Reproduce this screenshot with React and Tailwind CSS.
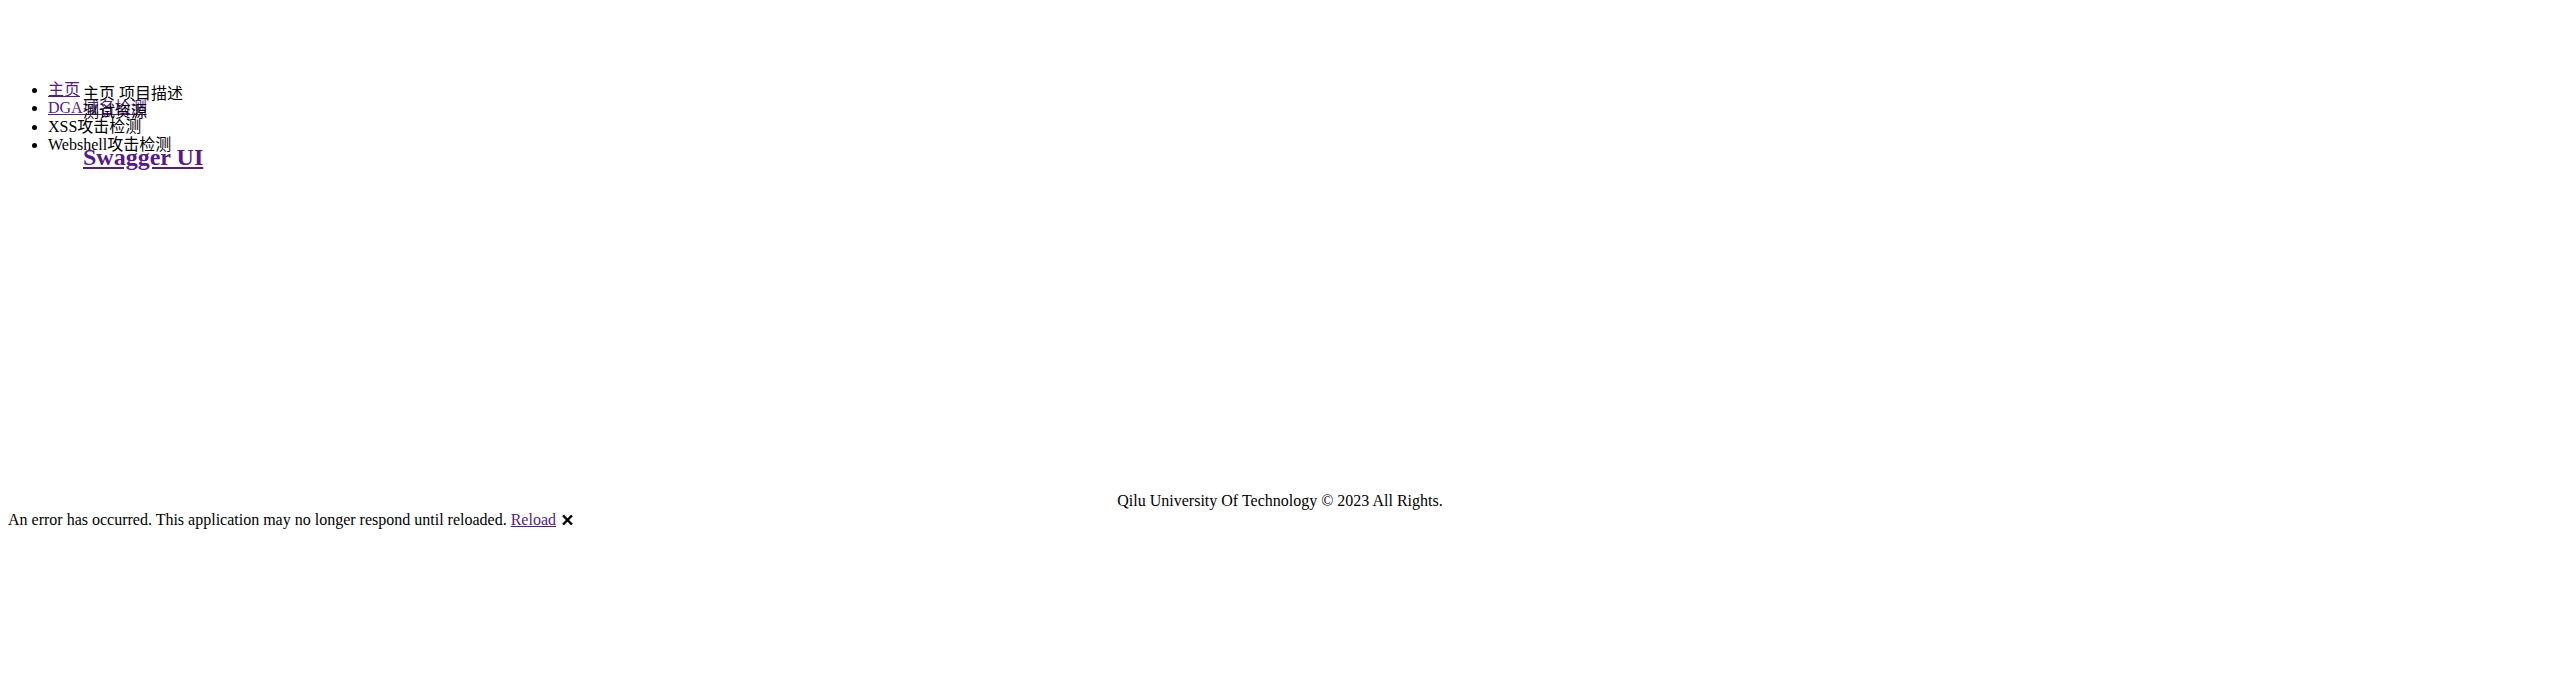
import React from "react";

export default function App() {
  return (
    <div className="relative min-h-[684px] bg-white p-2 font-['Liberation_Serif','Noto_Sans_CJK_SC',serif] text-[16px] leading-[18.4px] text-black">
      <ul className="mt-[73px] list-disc pl-10">
        <li>
          <a href="#" className="text-[#551a8b] underline">主页</a>
        </li>
        <li>
          <a href="#" className="text-[#551a8b] underline">DGA域名检测</a>
        </li>
        <li>XSS攻击检测</li>
        <li>Webshell攻击检测</li>
      </ul>

      <div className="absolute left-[83px] top-[85px] whitespace-nowrap">
        <div>主页 项目描述</div>
        <div>测试资源</div>
        <h2 className="mt-[22px] text-[24px] font-bold leading-[27.6px]">
          <a href="#" className="text-[#551a8b] underline">Swagger UI</a>
        </h2>
      </div>

      <footer className="mt-[337px] text-center">
        Qilu University Of Technology © 2023 All Rights.
      </footer>
      <div className="mt-px flex items-center">
        <span>
          An error has occurred. This application may no longer respond until reloaded.{" "}
          <a href="#" className="text-[#551a8b] underline">Reload</a>
        </span>
        <svg className="ml-[6px]" width="11" height="10" viewBox="0 0 11 10" aria-hidden="true">
          <path d="M1 0.5 L10 9.5 M10 0.5 L1 9.5" stroke="black" strokeWidth="2.4" />
        </svg>
      </div>
    </div>
  );
}
